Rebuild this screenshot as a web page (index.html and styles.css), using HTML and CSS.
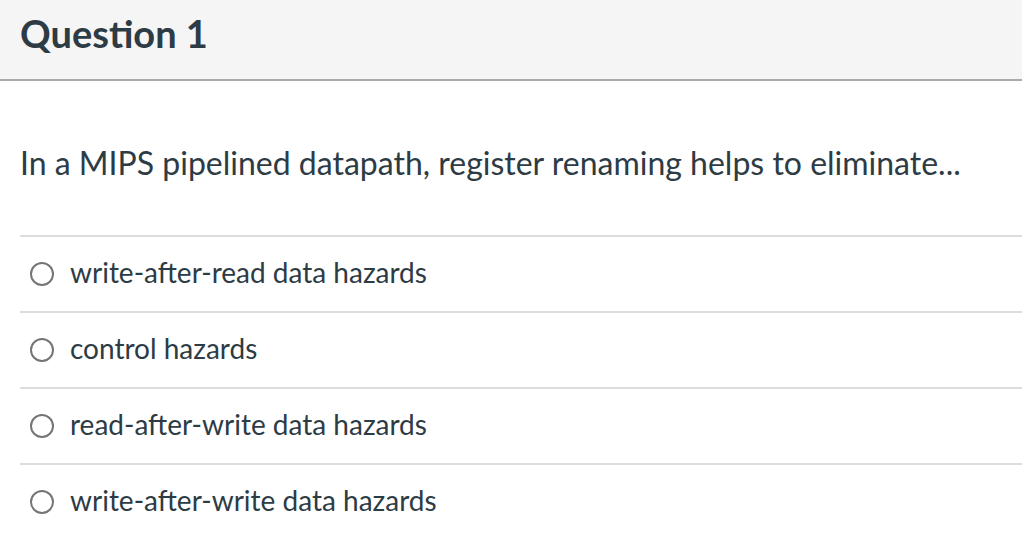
FILE: index.html
```html
<!DOCTYPE html>
<html lang="en">
<head>
<meta charset="utf-8">
<title>Question 1</title>
<link rel="stylesheet" href="styles.css">
</head>
<body>
<div class="question">
  <div class="header"><h2 class="title">Question 1</h2></div>
  <div class="body">
    <p class="text">In a MIPS pipelined datapath, register renaming helps to eliminate...</p>
    <div class="answers">
      <label class="answer"><span class="radio"></span><span class="label">write-after-read data hazards</span></label>
      <label class="answer"><span class="radio"></span><span class="label">control hazards</span></label>
      <label class="answer"><span class="radio"></span><span class="label">read-after-write data hazards</span></label>
      <label class="answer"><span class="radio"></span><span class="label">write-after-write data hazards</span></label>
    </div>
  </div>
</div>
</body>
</html>
```
FILE: styles.css
```css
* { box-sizing: border-box; }
html, body { margin: 0; padding: 0; background: #fff; }
body { font-family: Lato, "Open Sans", sans-serif; color: #2d3b45; }
.header {
  background: #f5f5f5;
  height: 81px;
  border-bottom: 2px solid #aaaaaa;
  padding: 10px 20px 0;
}
.title {
  margin: 0;
  font-size: 38px;
  font-weight: 700;
  line-height: 46px;
  color: #2d3b45;
}
.body { padding: 0 0 0 20px; }
.text {
  margin: 0;
  padding-top: 62px;
  height: 154px;
  font-size: 32px;
  line-height: 40px;
}
.answers { display: flex; flex-direction: column; }
.answer {
  display: flex;
  align-items: center;
  height: 76px;
  border-top: 2px solid #dddddd;
  padding-left: 10px;
}
.radio {
  width: 24px;
  height: 24px;
  border: 2px solid #757575;
  border-radius: 50%;
  flex: none;
  margin-right: 16px;
}
.label { font-size: 28px; line-height: 34px; margin-top: -4px; }
```
